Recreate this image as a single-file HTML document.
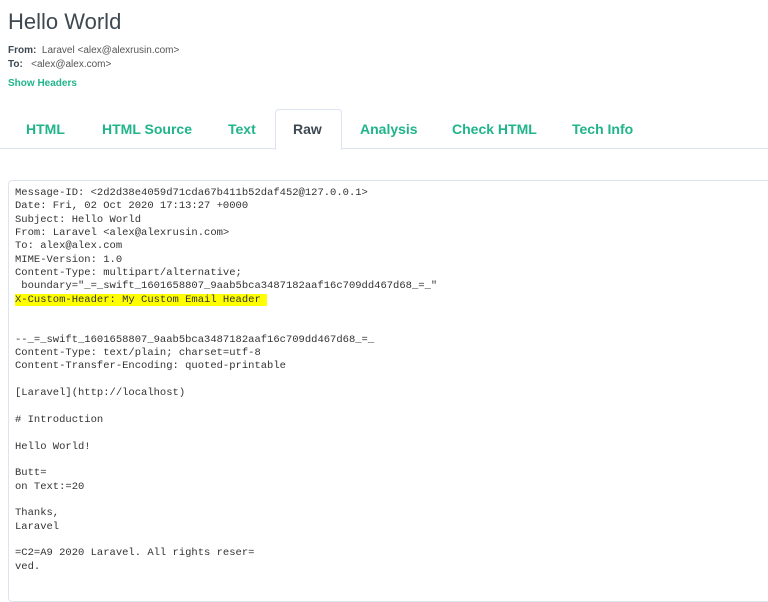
<!DOCTYPE html>
<html><head><meta charset="utf-8"><style>
body{margin:0;background:#fff;font-family:"Liberation Sans",sans-serif;color:#3d4852;width:768px;height:585px;overflow:hidden;position:relative}
.a{position:absolute;white-space:nowrap}
h1{position:absolute;left:8px;top:9px;margin:0;font-weight:normal;font-size:22px;color:#3d4852}
.meta{font-size:10px;color:#555}
.meta b{color:#3d4852}
.green{color:#20b48a;font-weight:bold}
.tab{position:absolute;top:121px;font-size:14px;font-weight:bold;color:#20b48a}
.tabline{position:absolute;left:0;right:0;top:148px;border-top:1px solid #dde3ef}
.raw{position:absolute;left:275px;top:109px;width:65px;height:40px;border:1px solid #dde3ef;border-bottom:none;border-radius:4px 4px 0 0;background:#fff}
.box{position:absolute;left:8px;top:180px;width:780px;height:420px;border:1px solid #dde3ef;border-radius:4px}
pre{position:absolute;left:15px;top:187px;margin:0;font-family:"Liberation Mono",monospace;font-size:10.5px;line-height:13.35px;color:#333}
.hl{background:#ffff00}
</style></head><body>
<h1>Hello World</h1>
<div class="a meta" style="left:8px;top:45px"><b>From:</b>&nbsp; Laravel &lt;alex@alexrusin.com&gt;</div>
<div class="a meta" style="left:8px;top:59px"><b>To:</b>&nbsp;&nbsp; &lt;alex@alex.com&gt;</div>
<div class="a green" style="left:8px;top:78px;font-size:10px">Show Headers</div>
<div class="tabline"></div>
<div class="raw"></div>
<div class="tab" style="left:26px">HTML</div>
<div class="tab" style="left:102px">HTML Source</div>
<div class="tab" style="left:228px">Text</div>
<div class="tab" style="left:293px;color:#3d4852">Raw</div>
<div class="tab" style="left:360px">Analysis</div>
<div class="tab" style="left:452px">Check HTML</div>
<div class="tab" style="left:572px">Tech Info</div>
<div class="box"></div>
<pre>Message-ID: &lt;2d2d38e4059d71cda67b411b52daf452@127.0.0.1&gt;
Date: Fri, 02 Oct 2020 17:13:27 +0000
Subject: Hello World
From: Laravel &lt;alex@alexrusin.com&gt;
To: alex@alex.com
MIME-Version: 1.0
Content-Type: multipart/alternative;
 boundary="_=_swift_1601658807_9aab5bca3487182aaf16c709dd467d68_=_"
<span class="hl">X-Custom-Header: My Custom Email Header </span>


--_=_swift_1601658807_9aab5bca3487182aaf16c709dd467d68_=_
Content-Type: text/plain; charset=utf-8
Content-Transfer-Encoding: quoted-printable

[Laravel](http://localhost)

# Introduction

Hello World!

Butt=
on Text:=20

Thanks,
Laravel

=C2=A9 2020 Laravel. All rights reser=
ved.</pre>
</body></html>
